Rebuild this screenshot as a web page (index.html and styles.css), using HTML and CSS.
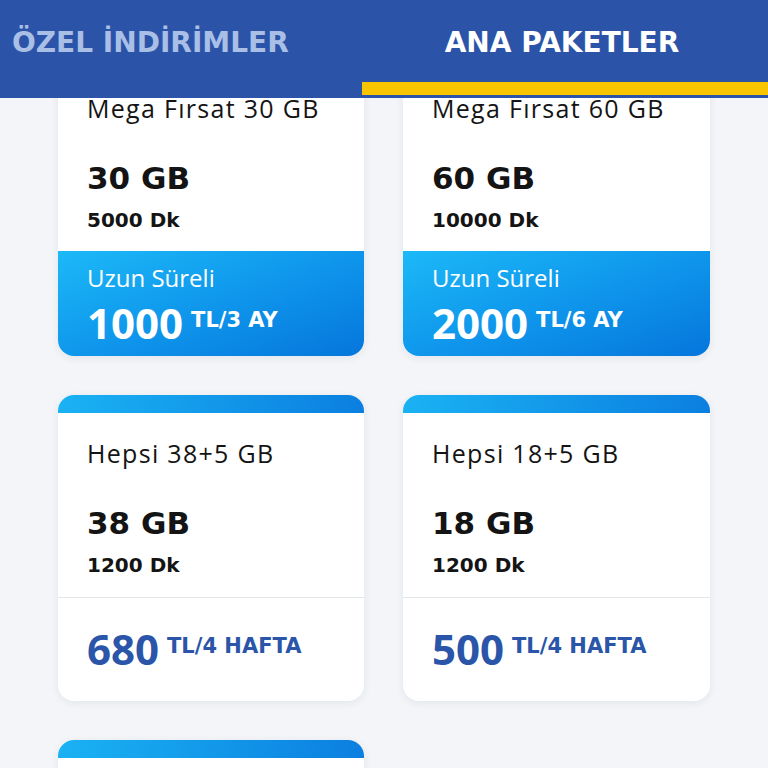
FILE: index.html
```html
<!DOCTYPE html>
<html lang="tr">
<head>
<meta charset="utf-8">
<title>Paketler</title>
<link rel="stylesheet" href="styles.css">
</head>
<body>
<header class="header">
  <div class="tab tab-left">ÖZEL İNDİRİMLER</div>
  <div class="tab tab-right">ANA PAKETLER</div>
</header>
<main class="grid">
  <div class="card">
    <div class="stripe"></div>
    <div class="body body-promo">
      <div class="title">Mega Fırsat 30 GB</div>
      <div class="gb">30 GB</div>
      <div class="dk">5000 Dk</div>
    </div>
    <div class="promo">
      <div class="promo-label">Uzun Süreli</div>
      <div class="price"><span class="num">1000</span><span class="unit">TL/3 AY</span></div>
    </div>
  </div>
  <div class="card">
    <div class="stripe"></div>
    <div class="body body-promo">
      <div class="title">Mega Fırsat 60 GB</div>
      <div class="gb">60 GB</div>
      <div class="dk">10000 Dk</div>
    </div>
    <div class="promo">
      <div class="promo-label">Uzun Süreli</div>
      <div class="price"><span class="num">2000</span><span class="unit">TL/6 AY</span></div>
    </div>
  </div>
  <div class="card">
    <div class="stripe"></div>
    <div class="body">
      <div class="title">Hepsi 38+5 GB</div>
      <div class="gb">38 GB</div>
      <div class="dk">1200 Dk</div>
    </div>
    <div class="plain">
      <div class="price blue"><span class="num">680</span><span class="unit">TL/4 HAFTA</span></div>
    </div>
  </div>
  <div class="card">
    <div class="stripe"></div>
    <div class="body">
      <div class="title">Hepsi 18+5 GB</div>
      <div class="gb">18 GB</div>
      <div class="dk">1200 Dk</div>
    </div>
    <div class="plain">
      <div class="price blue"><span class="num">500</span><span class="unit">TL/4 HAFTA</span></div>
    </div>
  </div>
  <div class="card card-next">
    <div class="stripe"></div>
    <div class="body-empty"></div>
  </div>
</main>
</body>
</html>
```

FILE: styles.css
```css
* { box-sizing: border-box; }
html, body { margin: 0; padding: 0; }
body {
  background: #f3f5f8;
  font-family: "Open Sans", Lato, "DejaVu Sans", sans-serif;
  color: #141414;
  height: 768px;
  overflow: hidden;
}
.header {
  position: fixed;
  top: 0; left: 0; right: 0;
  height: 98px;
  background: #2b54a9;
  display: flex;
  padding-bottom: 3px;
  z-index: 10;
}
.tab {
  font-family: "DejaVu Sans", "Open Sans", sans-serif;
  font-size: 28px;
  font-weight: 700;
  line-height: 34px;
  padding-top: 26px;
}
.tab-left {
  width: 362px;
  padding-left: 12px;
  color: #a9bfe6;
}
.tab-right {
  flex: 1;
  text-align: center;
  color: #ffffff;
  border-bottom: 13px solid #f9c400;
  padding-right: 6px;
}
.grid {
  display: grid;
  grid-template-columns: 306px 307px;
  column-gap: 39px;
  row-gap: 39px;
  padding: 50px 0 0 58px;
}
.card {
  background: #ffffff;
  border-radius: 16px;
  overflow: hidden;
  box-shadow: 0 2px 8px rgba(20, 40, 80, 0.08);
}
.stripe {
  height: 18px;
  background: linear-gradient(90deg, #1ab2f3, #0b7fe0);
}
.body {
  padding: 25px 29px 19px;
  border-bottom: 1px solid #e3e6ea;
}
.body-promo {
  padding-bottom: 18px;
  border-bottom: 0;
}
.body-empty { height: 60px; }
.title {
  font-size: 25px;
  line-height: 30px;
  font-weight: 400;
  letter-spacing: 1.3px;
}
.gb {
  font-family: "DejaVu Sans", "Open Sans", sans-serif;
  font-size: 31px;
  line-height: 40px;
  font-weight: 700;
  margin-top: 35px;
}
.dk {
  font-family: "DejaVu Sans", "Open Sans", sans-serif;
  font-size: 20px;
  line-height: 26px;
  font-weight: 700;
  margin-top: 9px;
}
.promo {
  background: linear-gradient(160deg, #1cb9f7 0%, #0f97ec 50%, #0576dc 100%);
  color: #ffffff;
  padding: 12px 29px 9px;
}
.promo-label {
  font-size: 24px;
  line-height: 30px;
}
.promo .price { margin-top: 6px; }
.plain {
  padding: 27px 29px 28px;
}
.price {
  display: flex;
  align-items: flex-start;
}
.num {
  font-size: 42px;
  line-height: 48px;
  font-weight: 700;
}
.unit {
  font-family: "DejaVu Sans", "Open Sans", sans-serif;
  font-size: 21px;
  line-height: 26px;
  font-weight: 700;
  margin-top: 8px;
  margin-left: 8px;
}
.blue { color: #2a55a8; }
```
